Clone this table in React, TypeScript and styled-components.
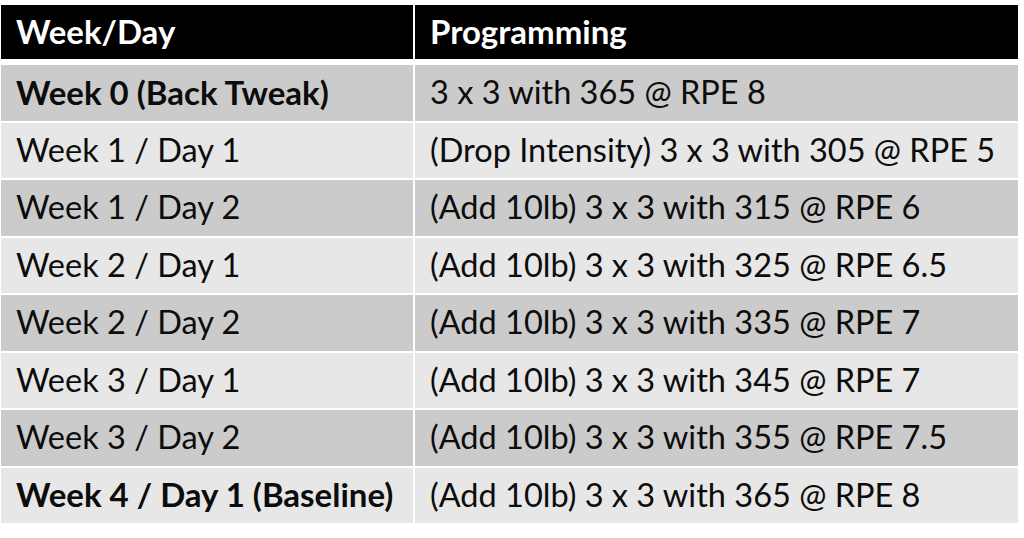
import styled, { createGlobalStyle } from "styled-components";

const GlobalStyle = createGlobalStyle`
  html, body {
    margin: 0;
    padding: 0;
    background: #ffffff;
  }
  body {
    font-family: Lato, "Open Sans", sans-serif;
  }
`;

const Page = styled.div`
  padding: 5px 6px 0 1px;
`;

const Table = styled.div`
  display: flex;
  flex-direction: column;
  gap: 2px;
  width: 1017px;
`;

const Row = styled.div<{ $shade: "head" | "dark" | "light" }>`
  display: grid;
  grid-template-columns: 412px 1fr;
  column-gap: 2px;
  height: ${({ $shade }) => ($shade === "head" ? "54px" : "55.5px")};
  margin-bottom: ${({ $shade }) => ($shade === "head" ? "4px" : "0")};
  & > div {
    background: ${({ $shade }) =>
      $shade === "head" ? "#000000" : $shade === "dark" ? "#cbcbcb" : "#e7e7e7"};
    color: ${({ $shade }) => ($shade === "head" ? "#ffffff" : "#0c0c0c")};
  }
`;

const Cell = styled.div<{ $bold?: boolean }>`
  display: flex;
  align-items: center;
  padding-left: 15px;
  padding-bottom: 2px;
  font-size: ${({ $bold }) => ($bold ? "33px" : "32.5px")};
  font-weight: ${({ $bold }) => ($bold ? 700 : 400)};
  white-space: nowrap;
`;

const rows = [
  { day: "Week 0 (Back Tweak)", prog: "3 x 3 with 365 @ RPE 8", bold: true },
  { day: "Week 1 / Day 1", prog: "(Drop Intensity) 3 x 3 with 305 @ RPE 5" },
  { day: "Week 1 / Day 2", prog: "(Add 10lb) 3 x 3 with 315 @ RPE 6" },
  { day: "Week 2 / Day 1", prog: "(Add 10lb) 3 x 3 with 325 @ RPE 6.5" },
  { day: "Week 2 / Day 2", prog: "(Add 10lb) 3 x 3 with 335 @ RPE 7" },
  { day: "Week 3 / Day 1", prog: "(Add 10lb) 3 x 3 with 345 @ RPE 7" },
  { day: "Week 3 / Day 2", prog: "(Add 10lb) 3 x 3 with 355 @ RPE 7.5" },
  { day: "Week 4 / Day 1 (Baseline)", prog: "(Add 10lb) 3 x 3 with 365 @ RPE 8", bold: true },
];

function App() {
  return (
    <Page>
      <GlobalStyle />
      <Table>
        <Row $shade="head">
          <Cell $bold>Week/Day</Cell>
          <Cell $bold>Programming</Cell>
        </Row>
        {rows.map((r, i) => (
          <Row key={r.day} $shade={i % 2 === 0 ? "dark" : "light"}>
            <Cell $bold={r.bold}>{r.day}</Cell>
            <Cell>{r.prog}</Cell>
          </Row>
        ))}
      </Table>
    </Page>
  );
}

export default App;
